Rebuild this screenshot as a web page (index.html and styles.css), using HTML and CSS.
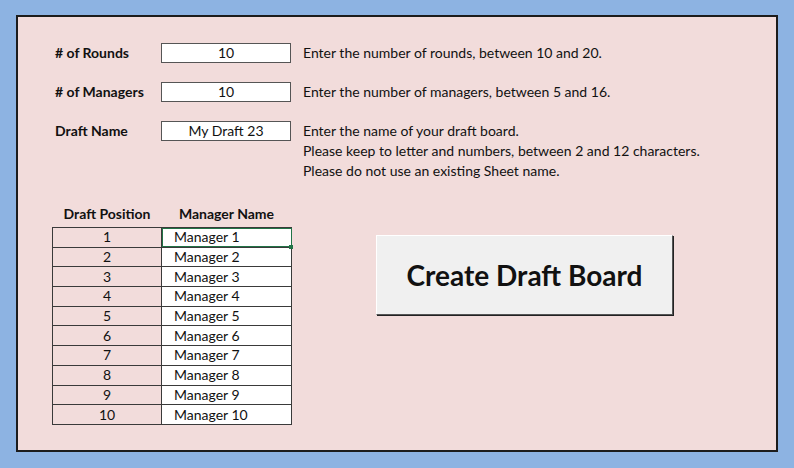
FILE: index.html
```html
<!DOCTYPE html>
<html lang="en">
  <head>
    <meta charset="UTF-8" />
    <meta name="viewport" content="width=device-width, initial-scale=1.0" />
    <title>Draft Board Setup</title>
    <link rel="stylesheet" href="styles.css">
  </head>
  <body>
    <div class="sheet">
      <div class="settings">
        <span class="label"># of Rounds</span>
        <div class="cell">10</div>
        <div class="note">Enter the number of rounds, between 10 and 20.</div>

        <span class="label"># of Managers</span>
        <div class="cell">10</div>
        <div class="note">Enter the number of managers, between 5 and 16.</div>

        <span class="label">Draft Name</span>
        <div class="cell">My Draft 23</div>
        <div class="note">
          Enter the name of your draft board.<br />
          Please keep to letter and numbers, between 2 and 12 characters.<br />
          Please do not use an existing Sheet name.
        </div>
      </div>

      <div class="lower">
        <table class="managers">
          <thead>
            <tr>
              <th class="pos">Draft Position</th>
              <th class="name">Manager Name</th>
            </tr>
          </thead>
          <tbody>
            <tr><td class="pos">1</td><td class="name selected">Manager 1</td></tr>
            <tr><td class="pos">2</td><td class="name">Manager 2</td></tr>
            <tr><td class="pos">3</td><td class="name">Manager 3</td></tr>
            <tr><td class="pos">4</td><td class="name">Manager 4</td></tr>
            <tr><td class="pos">5</td><td class="name">Manager 5</td></tr>
            <tr><td class="pos">6</td><td class="name">Manager 6</td></tr>
            <tr><td class="pos">7</td><td class="name">Manager 7</td></tr>
            <tr><td class="pos">8</td><td class="name">Manager 8</td></tr>
            <tr><td class="pos">9</td><td class="name">Manager 9</td></tr>
            <tr><td class="pos">10</td><td class="name">Manager 10</td></tr>
          </tbody>
        </table>

        <button class="create-btn" type="button">Create Draft Board</button>
      </div>
    </div>
  </body>
</html>
```

FILE: styles.css
```css
body {
  font-family: Lato, "Liberation Sans", sans-serif;
  font-size: 14px;
  color: #111;
  margin: 0;
  padding: 15px 16px 0 16px;
  background-color: #8db3e2;
}

.sheet {
  width: 758px;
  height: 433px;
  border: 2px solid #1c1c1c;
  background-color: #f2dcdb;
}

/* Top block: label / value cell / hint text */
.settings {
  display: grid;
  grid-template-columns: 94px 130px auto;
  column-gap: 12px;
  row-gap: 19px;
  padding: 26px 0 0 37px;
  align-items: start;
}

.label {
  font-weight: bold;
  line-height: 20px;
}

.cell {
  height: 18px;
  line-height: 18px;
  background-color: #ffffff;
  border: 1px solid #555;
  text-align: center;
}

.note {
  line-height: 20px;
}

/* Bottom block: manager table and the big button */
.lower {
  display: flex;
  align-items: flex-start;
  margin-top: 23px;
  padding-left: 34px;
}

.managers {
  border-collapse: collapse;
}

.managers th {
  font-weight: bold;
  height: 20px;
  padding: 0 0 3px 0;
  line-height: 18px;
  text-align: center;
}

.managers td {
  border: 1px solid #3a3a3a;
  height: 18.7px;
  line-height: 18px;
  padding: 0;
}

.managers .pos {
  width: 108px;
  text-align: center;
}

.managers .name {
  width: 129px;
}

.managers td.name {
  background-color: #ffffff;
  padding-left: 12px;
  width: 117px;
}

/* active cell: green frame plus the fill handle */
.managers td.selected {
  outline: 1px solid #217346;
  outline-offset: -1px;
  position: relative;
}

.managers td.selected:after {
  content: "";
  position: absolute;
  right: -2px;
  bottom: -2px;
  width: 4px;
  height: 4px;
  background-color: #217346;
}

.create-btn {
  margin: 31px 0 0 84px;
  width: 297px;
  height: 80px;
  font-family: inherit;
  font-size: 28px;
  font-weight: bold;
  color: #111;
  background-color: #f0f0f0;
  border: 1px solid;
  border-color: #ffffff #555 #555 #ffffff;
  box-shadow: 1px 1px 0 #222;
  cursor: pointer;
}
```
